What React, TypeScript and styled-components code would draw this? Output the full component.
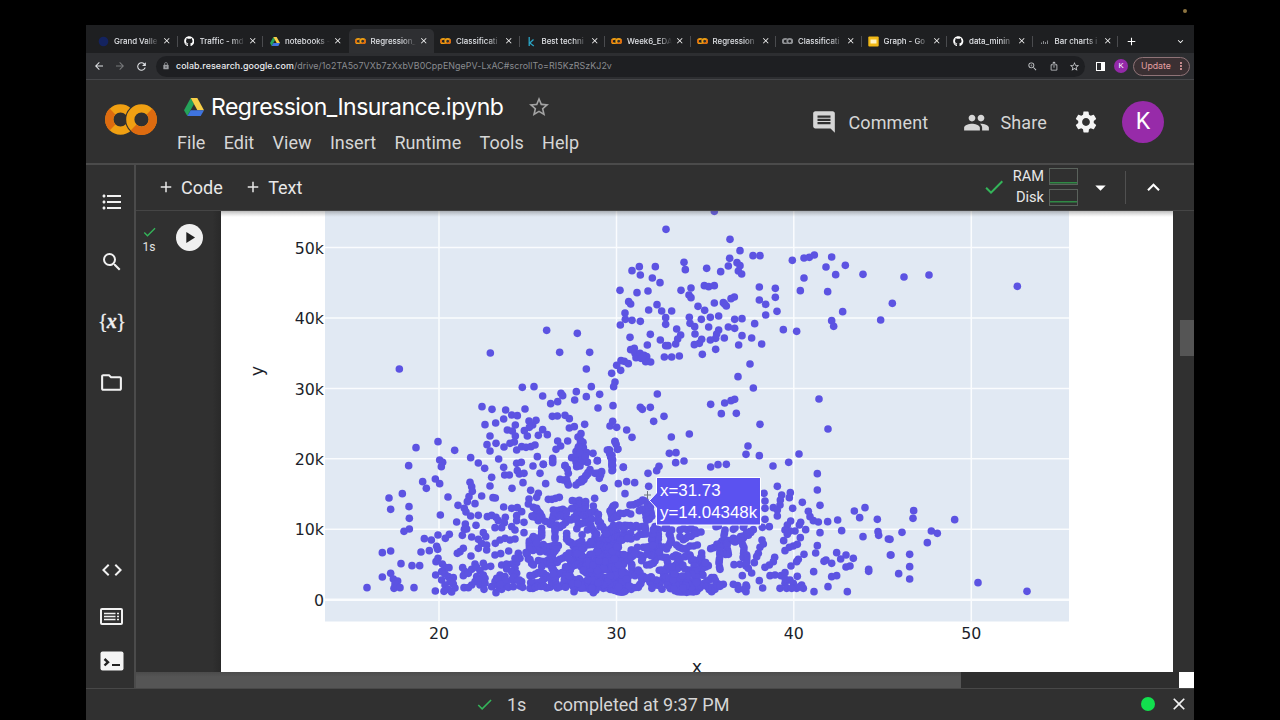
import React from "react";
import styled, { createGlobalStyle } from "styled-components";
import {
  MdInsertComment, MdPeople, MdSettings, MdSearch, MdCode, MdStarBorder, MdFormatListBulleted,
  MdOutlineFolder, MdPlayArrow, MdCheck, MdArrowDropDown, MdExpandLess, MdAdd,
  MdClose, MdArrowBack, MdArrowForward, MdRefresh, MdLock, MdZoomIn, MdIosShare, MdMoreVert,
  MdExpandMore,
} from "react-icons/md";
import { FaGithub } from "react-icons/fa";

const GlobalStyle = createGlobalStyle`
  * { box-sizing: border-box; }
  body { margin: 0; background: #000; overflow: hidden; font-family: Roboto, "Liberation Sans", sans-serif; }
`;

const Screen = styled.div`
  position: relative;
  width: 1280px;
  height: 720px;
  padding: 25px 86px 0;
  background: #000;
  overflow: hidden;
`;
const CameraDot = styled.div`
  position: absolute;
  left: 1183px;
  top: 9px;
  width: 4px;
  height: 4px;
  border-radius: 50%;
  background: #8d7440;
`;
const Browser = styled.div`
  display: flex;
  flex-direction: column;
  width: 1108px;
  height: 695px;
  background: #303030;
  > * { flex-shrink: 0; }
`;
const TabStrip = styled.div`
  display: flex;
  align-items: stretch;
  height: 28px;
  padding: 4px 0 0 6px;
  background: #1e1f21;
`;
const Tab = styled.div<{ $active?: boolean; $bare?: boolean }>`
  display: flex;
  align-items: center;
  width: 85.5px;
  padding-left: 6px;
  border-radius: 5px 5px 0 0;
  background: ${(p) => (p.$active ? "#2e2f32" : "transparent")};
  color: #dfe1e5;
  &::after {
    content: "";
    width: 1px;
    height: 11px;
    margin-left: auto;
    background: ${(p) => (p.$bare ? "transparent" : "#4a4b4e")};
  }
`;
const Favicon = styled.span`
  display: flex;
  align-items: center;
  justify-content: center;
  width: 11px;
  height: 12px;
  margin-right: 5px;
`;
const TabTitle = styled.span`
  width: 45px;
  white-space: nowrap;
  font: 500 7.9px/12px Inter, sans-serif;
  mask-image: linear-gradient(to right, #000 70%, transparent 100%);
`;
const TabClose = styled(MdClose)`
  margin-left: 3px;
  width: 9.5px;
  height: 9.5px;
  color: #fff;
`;
const StripEnd = styled.div`
  display: flex;
  flex: 1;
  align-items: center;
  justify-content: space-between;
  padding: 0 8px 0 7px;
  color: #fff;
`;
const AddressBar = styled.div`
  display: flex;
  align-items: center;
  height: 26px;
  padding: 0 4px 0 7px;
  background: #2d2e31;
  color: #dfe1e5;
`;
const NavButtons = styled.div`
  display: flex;
  gap: 9px;
  width: 63px;
`;
const Omnibox = styled.div`
  display: flex;
  align-items: center;
  width: 929px;
  height: 21px;
  padding: 0 5px 0 6px;
  border-radius: 11px;
  background: #1e1f22;
`;
const LockSlot = styled.span`
  display: flex;
  width: 8px;
`;
const Url = styled.span`
  margin-left: 6px;
  flex: 1;
  font: 400 8.9px/14px Inter, sans-serif;
  letter-spacing: 0.07px;
  color: #8a8c90;
  white-space: nowrap;
  b { font-weight: 500; color: #eceef1; }
`;
const OmniIcons = styled.div`
  display: flex;
  gap: 10.5px;
  color: #c8cacd;
`;
const SidePanelIcon = styled.span`
  width: 9px;
  height: 9px;
  margin-left: 11px;
  border: 1.3px solid #fff;
  border-right-width: 4px;
`;
const MiniAvatar = styled.span`
  width: 14px;
  height: 14px;
  margin-left: 9px;
  border-radius: 50%;
  background: #9329a8;
  color: #fff;
  font: 400 8px/14px Roboto, sans-serif;
  text-align: center;
`;
const UpdatePill = styled.span`
  display: flex;
  align-items: center;
  justify-content: space-between;
  width: 57px;
  height: 19px;
  margin-left: 5px;
  padding: 0 2px 0 7px;
  border: 1px solid #8f7377;
  border-radius: 10px;
  background: #3b3033;
  color: #e6a0a4;
  font: 400 8.7px/12px Inter, sans-serif;
`;
const Header = styled.header`
  display: flex;
  height: 86px;
  border-top: 1px solid #454649;
  border-bottom: 2px solid #4b4b4b;
  background: #303030;
  color: #d6d6d6;
`;
const LogoBox = styled.div`
  width: 91px;
  padding: 24px 0 0 19px;
`;
const TitleBlock = styled.div`
  flex: 1;
`;
const TitleRow = styled.div`
  display: flex;
  align-items: center;
  height: 30px;
  margin-top: 12px;
  padding-left: 7px;
`;
const FileName = styled.span`
  width: 316px;
  margin-left: 7px;
  font: 400 23px/30px Inter, sans-serif;
  letter-spacing: -0.52px;
  color: #fff;
  white-space: nowrap;
`;
const Menu = styled.nav`
  display: flex;
  gap: 18.3px;
  margin-top: 9px;
  font-size: 18px;
  line-height: 24px;
  letter-spacing: 0.03px;
`;
const HeaderActions = styled.div`
  display: flex;
  align-items: center;
  padding: 1px 30px 0 0;
  font-size: 18px;
  letter-spacing: 0.15px;
  svg { display: block; }
`;
const Action = styled.span<{ $gap: number; $after: number }>`
  display: flex;
  align-items: center;
  gap: ${(p) => p.$gap}px;
  margin-right: ${(p) => p.$after}px;
`;
const Avatar = styled.span`
  width: 42px;
  height: 42px;
  border-radius: 50%;
  background: #972ba9;
  color: #fff;
  font: 400 23px/42px Roboto, sans-serif;
  text-align: center;
`;
const Workspace = styled.div`
  display: flex;
  height: 523px;
`;
const SideRail = styled.aside`
  display: flex;
  flex-direction: column;
  align-items: center;
  justify-content: space-between;
  width: 50px;
  padding: 25px 0 17px;
  border-right: 2px solid #4b4b4b;
  color: #f1f1f1;
`;
const RailGroup = styled.div<{ $gap: number }>`
  display: flex;
  flex-direction: column;
  align-items: center;
  gap: ${(p) => p.$gap}px;
  padding-left: 3px;
`;
const Variables = styled.span`
  height: 24px;
  font: 20px/23px "Liberation Serif", serif;
  letter-spacing: -0.7px;
  -webkit-text-stroke: 0.3px #f1f1f1;
  i { font-weight: bold; }
`;
const Main = styled.main`
  flex: 1;
  display: flex;
  flex-direction: column;
`;
const CellToolbar = styled.div`
  display: flex;
  align-items: center;
  height: 46px;
  padding: 0 28px 1px 21px;
  border-bottom: 1px solid #454545;
  color: #e8e8e8;
  font-size: 18px;
`;
const AddButton = styled.span`
  display: flex;
  align-items: center;
  gap: 6px;
  margin-right: 21.5px;
`;
const Resources = styled.div`
  display: flex;
  align-items: center;
  margin-left: auto;
`;
const Gauges = styled.div`
  display: grid;
  grid-template-columns: 31px 29px;
  column-gap: 5px;
  row-gap: 4px;
  margin: 0 10px 0 7px;
  font-size: 14.6px;
  line-height: 17px;
  text-align: right;
  white-space: nowrap;
`;
const GaugeLabel = styled.span`
  display: flex;
  justify-content: flex-end;
`;
const Gauge = styled.span<{ $level: number }>`
  height: 17px;
  border: 1px solid #5a625c;
  background: linear-gradient(#2f8a45, #2f8a45) 0 ${(p) => p.$level}px / 100% 1.5px no-repeat;
`;
const Divider = styled.span`
  width: 1px;
  height: 33px;
  margin: 0 15px 0 12px;
  background: #505050;
`;
const CellArea = styled.div`
  display: flex;
  height: 461px;
`;
const Gutter = styled.div`
  display: flex;
  gap: 19px;
  width: 85px;
  padding: 13px 0 0 5px;
  background: linear-gradient(to right, #303030 90%, #292929);
`;
const RunState = styled.div`
  display: flex;
  flex-direction: column;
  align-items: center;
  width: 16px;
  height: 30px;
  color: #e3e3e3;
  font-size: 12px;
  line-height: 14px;
`;
const PlayButton = styled.span`
  display: flex;
  align-items: center;
  justify-content: center;
  width: 27px;
  height: 27px;
  border-radius: 50%;
  background: #f0f0f0;
  color: #222;
`;
const Output = styled.div`
  width: 952px;
  background: #fff;
  svg { display: block; }
`;
const ScrollTrack = styled.div`
  width: 21px;
  padding: 109px 0 0 7px;
  background: #303030;
`;
const ScrollThumb = styled.div`
  height: 36px;
  background: #555;
`;
const BottomScroll = styled.div`
  display: flex;
  justify-content: space-between;
  height: 16px;
  background: #2e2e2e;
`;
const BottomThumb = styled.div`
  width: 825px;
  background: linear-gradient(#4b4b4b, #555 30%);
`;
const ScrollCorner = styled.div`
  width: 15px;
  background: #fff;
`;
const StatusBar = styled.footer`
  display: flex;
  align-items: center;
  justify-content: space-between;
  height: 32px;
  padding: 0 5px 1px 389px;
  border-top: 1px solid #484848;
  background: #303030;
  color: #d6d6d6;
  font-size: 18px;
  white-space: nowrap;
`;
const StatusText = styled.div`
  display: flex;
  align-items: center;
`;
const Elapsed = styled.span`
  margin: 0 27px 0 13px;
`;
const StatusEnd = styled.div`
  display: flex;
  align-items: center;
  gap: 14px;
  color: #f1f1f1;
`;
const Online = styled.span`
  width: 14px;
  height: 14px;
  border-radius: 50%;
  background: #12e04e;
`;

const ColabMark = ({ width, dim }: { width: number; dim?: boolean }) => {
  const amber = dim ? "#8f9194" : "#f0a012";
  const deep = dim ? "#8f9194" : "#dd6b10";
  return (
    <svg width={width} viewBox="0 0 52 31" fill="none" strokeWidth="8.2">
      <circle cx="15.5" cy="15.5" r="11.2" stroke={amber} />
      <path d="M7.5 23.5A11.3 11.3 0 0 1 7.5 7.5" stroke={deep} />
      <circle cx="36.5" cy="15.5" r="16.4" fill={dim ? "#1e1f21" : "#303030"} />
      <circle cx="36.5" cy="15.5" r="11.2" stroke={amber} />
      <path d="M44.5 7.5A11.3 11.3 0 0 1 28.5 23.5" stroke={deep} />
    </svg>
  );
};

const DriveMark = ({ width }: { width: number }) => (
  <svg width={width} viewBox="0 0 20 18">
    <path d="M6.7 0L0 12.2L3.3 18L10 6Z" fill="#25a35a" />
    <path d="M6.7 0H13.3L20 12.2H13.4Z" fill="#f8cf48" />
    <path d="M3.3 18L6.7 12.2H20L16.7 18Z" fill="#3f74e0" />
  </svg>
);

type Kind = "crest" | "github" | "drive" | "colab" | "colabDim" | "kaggle" | "slides" | "bars";
const tabs: [Kind, string][] = [
  ["crest", "Grand Valle"], ["github", "Traffic - md"], ["drive", "notebooks -"],
  ["colab", "Regression_"], ["colab", "Classificati"], ["kaggle", "Best techni"],
  ["colab", "Week6_EDA"], ["colab", "Regression"], ["colabDim", "Classificati"],
  ["slides", "Graph - Go"], ["github", "data_minin"], ["bars", "Bar charts i"],
];

const TabIcon = ({ kind }: { kind: Kind }) => {
  if (kind === "github") return <FaGithub size={10.5} color="#fff" />;
  if (kind === "drive") return <DriveMark width={10} />;
  if (kind === "colab") return <ColabMark width={11} />;
  if (kind === "colabDim") return <ColabMark width={11} dim />;
  return (
    <svg width="11" height="11" viewBox="0 0 11 11">
      {kind === "crest" && <circle cx="5.5" cy="5.5" r="4.8" fill="#14235f" />}
      {kind === "kaggle" && (
        <path d="M3.2 1V10M7.5 3.5L3.8 7L7.8 10" stroke="#2aa4c4" strokeWidth="1.3" fill="none" />
      )}
      {kind === "slides" && (
        <>
          <rect x="0.3" y="0.5" width="10.4" height="10" rx="1" fill="#f1b917" />
          <rect x="2.5" y="3.5" width="6" height="4" fill="#fff3c4" />
        </>
      )}
      {kind === "bars" && <path d="M2.5 8V6.5M4.5 8V5M6.5 8V6M8.5 8V4.5" stroke="#8a8c90" />}
    </svg>
  );
};

/* Marker positions, in thirds of a pixel from the origin of each quadrant. */
const leftTop = `680,361 772,370 511,429 719,427 809,427 238,477 799,477 607,532 642,530 814,530 668,558
723,550 728,557 769,545 764,570 799,560 839,553 692,581 713,575 486,590 516,598 557,600 615,597 834,594
575,615 592,617 697,619 712,618 735,616 748,626 551,627 527,639 495,644 586,645 627,633 648,631 638,645
628,652 794,643 748,654 763,650 562,660 577,663 586,678 613,662 622,678 668,659 655,676 682,674 783,671
774,681 510,678 501,704 528,700 510,723 354,695 288,713 404,721 552,711 570,700 583,696 590,720 605,710
618,712 633,710 645,705 713,693 722,708 708,718 743,693 789,697 790,712 452,743 475,759 536,747 652,740
698,745 698,758 670,763 639,768 735,767 590,760 604,757 266,767 359,750 368,757 364,770 768,725 755,743
778,738 790,725 800,728 819,730 768,755 780,768 802,756 832,752 778,752 765,745`;
const rightTop = `343,4 198,58 390,88 420,122 459,137 480,137 389,145 411,158 420,167 385,168 415,183 425,192
362,185 320,175 252,157 256,179 166,170 118,170 96,182 121,195 157,204 180,218 60,241 111,248 144,243
243,241 273,234 267,255 273,263 313,227 326,230 343,227 403,261 393,266 343,279 370,278 379,288 374,282
478,231 526,235 526,262 478,270 497,283 497,315 531,304 86,275 92,282 75,309 76,328 96,331 121,334 61,345
146,300 171,284 185,303 215,303 197,323 197,343 294,289 314,301 268,322 270,340 284,350 285,372 304,328
331,322 356,318 404,328 426,326 464,341 326,351 385,351 404,355 356,360 350,372 347,385 331,390 373,384
426,377 455,384 485,402 416,405 347,418 307,433 230,357 242,375 233,387 227,402 204,407 197,407 181,390
151,373 142,405 90,382 305,388 298,400 283,404 193,441 215,441 238,438 92,419 103,415 105,430 108,443
120,430 123,445 132,436 140,440 137,455 152,456 128,440 50,466 63,452 73,454 85,461 62,481 35,490 45,516
41,530 172,552 39,587 121,592 127,598 151,592 192,619 161,634 80,660 96,682 38,634 30,648 50,652 45,694
54,717 28,720 32,740 38,750 38,766 268,672 214,681 208,730 228,728 227,758 252,753 70,771 332,583 374,579
393,572 404,568 364,611 409,610 450,462 414,500 460,534 480,643 444,708 438,733 478,737 332,771 354,764
379,763 597,732 566,757 519,768 657,567 684,657 550,359 590,364 577,151 612,144 628,142 643,135 695,141
678,171 736,166 707,194 789,193 612,204 601,242 683,245 728,305 695,332 701,349 842,330 877,280`;
const leftBottom = `494,115 551,112 515,142 554,135 568,135 592,122 598,132 612,130 609,158 660,130 677,161 510,168
576,175 632,181 308,155 346,147 359,161 319,175 384,201 247,191 207,204 212,238 267,230 268,265 268,297
252,304 361,255 450,157 455,170 457,184 485,198 447,200 442,215 465,221 414,226 433,235 438,246 519,203
526,204 655,190 650,202 627,207 452,258 475,256 410,276 436,282 468,286 433,298 440,297 427,316 502,260
515,256 528,262 535,272 556,262 553,278 545,293 525,293 551,231 575,235 592,233 605,245 590,257 590,272
612,277 575,290 585,300 612,308 625,222 640,232 636,258 650,240 660,250 645,255 665,262 655,272 676,274
354,315 388,313 376,325 313,326 334,330 350,349 353,358 328,362 303,366 430,355 420,365 412,370 455,321
475,328 490,308 497,320 485,340 475,355 500,345 500,360 453,378 526,340 540,330 555,325 570,330 585,327
525,375 542,371 566,363 595,370 187,368 212,363 243,401 276,407 299,407 187,441 212,430 220,447 233,453
225,462 222,475 240,473 141,473 282,473 354,385 348,395 367,402 375,412 387,413 365,425 347,435 375,432
365,450 385,440 400,443 390,455 400,462 375,465 405,474 385,478 372,484 395,486 346,483 428,413 435,425
430,437 445,430 455,418 465,402 470,412 490,400 512,409 495,410 480,422 490,435 495,445 470,440 465,455
478,450 455,465 432,473 445,473 480,465 495,460 492,478 515,470 545,405 560,402 575,402 590,398 600,385
585,385 560,417 585,415 575,425 590,430 540,435 555,440 530,445 525,455 560,455 545,455 575,450 590,450
605,455 535,468 550,470 565,472 580,470 600,468 528,488 545,478 608,472 852,175 824,205 820,228 735,107
802,97 832,92 698,92 670,103`;
const rightBottom = `55,161 80,155 104,158 75,191 144,130 170,122 177,109 146,169 303,306 302,265 12,174 70,112
652,131 652,180 660,226 532,169 571,188 568,203 545,195 541,210 540,225 520,233 532,240 532,258 607,217
578,235 625,244 630,260 640,272 655,276 683,275 713,270 660,308 725,302 617,299 572,273 562,285 585,303
602,277 598,285 570,303 555,300 562,313 551,332 601,323 592,343 580,348 568,352 555,362 652,347 647,369
612,373 595,388 590,395 573,408 641,425 710,368 738,375 722,387 760,385 678,390 672,394 695,400 750,408
738,411 806,418 806,424 710,437 695,440 684,470 642,485 742,485 763,243 795,233 779,263 832,268 789,320
834,305 836,316 865,327 871,375 495,213 495,235 492,190 495,268 487,292 508,290 486,330 490,342 480,352
475,370 470,380 463,398 524,382 520,395 508,405 495,412 478,452 488,474 455,429 427,437 402,404 420,403
438,408 445,415 440,380 430,380 400,463 413,467 415,478 438,465 432,478 438,485 440,470 510,437 525,435
543,437 555,428 592,439 570,450 555,460 540,475 560,475 580,460 590,475 605,465 610,475 600,470 575,475
556,448`;
const farRight = `42,201 117,195 382,229 71,902 69,925 36,967 124,963 142,970 112,998 194,929 59,1033 59,1070
59,1107 26,1091 3,1035 0,988 264,1118 411,1144`;

/* Runs of overlapping markers, each walked from point to point. */
const leftRuns = [
  "685,208 718,205", "720,148 740,150 745,167", "742,117 745,128", "768,165 785,150 810,122 798,140 785,155",
  "770,80 770,112 785,95 790,60", "838,145 845,127 825,132", "757,212 778,210 775,228 755,238",
  "797,215 795,240 770,250 800,260 815,245 835,250 835,275 848,288", "700,240 738,240 740,262 700,256 690,285 720,290 762,262",
  "765,262 775,282 792,280 815,268", "705,290 705,325", "665,295 665,320 628,330 628,350 660,345 690,350 715,345 700,370 660,362 628,358",
  "740,310 740,330 760,345 785,340 785,330", "812,285 825,310 825,340 800,348 770,360", "618,368 625,385 640,405",
  "655,392 680,400 712,398 692,382 665,408", "720,388 765,362 765,400 745,385", "780,352 780,400 800,382 830,365 860,355 895,350",
  "880,228 870,245 893,260", "855,300 888,292 893,340 852,322 870,350", "630,437 655,430 680,435 665,455 632,460",
  "630,475 655,470 680,472 700,465 690,445 712,432 700,420 712,475", "650,235 665,262 638,262", "868,60 875,90 878,122",
  "800,400 830,390 860,380 890,370", "735,465 760,450 790,455 820,445", "762,485 765,470 800,475 820,486 835,470", "870,410 880,380",
  "722,430 748,410 775,405 800,420", "840,330 830,370", "742,455 720,472", "690,400 700,430", "640,320 650,335",
  "800,430 830,415 860,400 890,400", "810,460 840,450 870,440 895,430", "850,475 890,475",
];
const rightRuns = [
  "45,225 32,240 35,265 60,252 92,250", "90,225 110,222 128,212 150,225 155,260 140,270 135,240 118,240", "20,310 40,290 75,285 100,290 135,290 138,310 110,318",
  "20,330 45,320 70,325 72,300", "165,290 175,300 175,340 155,330 160,300", "130,352 160,352 200,355 215,335 208,310 215,300",
  "195,295 200,292", "240,300 262,297 285,297 290,312 265,318 250,330 240,320", "230,345 250,360 270,350 292,348",
  "375,300 372,320 360,340 332,355", "362,350 380,340 400,325 430,325 460,300 430,315 405,335", "425,335 432,355 430,380",
  "380,340 385,375 360,365 357,400 360,418", "400,298 405,290", "348,290 355,288", "430,292 432,288", "0,345 20,350 40,345 55,370 80,380 110,370 130,380 125,395",
  "0,380 25,370 30,400 0,400", "75,385 95,400 95,425 105,440", "140,405 160,400 175,375 200,385 205,410 195,425", "160,370 165,350",
  "220,380 235,375 240,395 225,405", "255,380 270,372 275,395 300,390 305,370 305,420 285,430", "300,415 325,410", "245,410 265,420 290,420",
  "90,470 115,475 130,440 150,455 175,465 190,445 215,450 230,440", "210,420 225,435 225,480 250,487 270,487 290,487 300,470",
  "245,440 260,455 250,470 240,450", "290,430 295,470 320,455 342,440 350,460 370,463", "335,485 320,470 345,475 360,467",
  "185,420 195,440", "270,455 275,475", "0,420 20,415 40,420 65,425 85,440 80,460 60,470 35,450 10,445 25,465 5,470 35,475 62,488 85,478", "50,430 40,460 70,450",
  "55,485 75,485", "115,420 125,440", "440,375 440,400", "0,290 8,290", "22,60 36,75 36,120", "45,35 52,55",
];
const bands: [number, number, number, number, number][] = [
  [585, 560, 626, 590, 75], [562, 562, 584, 588, 18], [576, 526, 600, 556, 14],
  [604, 530, 632, 560, 22], [626, 562, 706, 590, 30], [668, 572, 700, 591, 18], [576, 438, 586, 462, 7],
  [634, 534, 663, 556, 8], [498, 577, 520, 589, 6],
];

type Point = [number, number];
const parse = (text: string): Point[] => text.trim().split(/\s+/).map((p) => p.split(",").map(Number) as Point);
const place = (pts: Point[], x: number, y: number): Point[] => pts.map(([a, b]) => [x + a / 3, y + b / 3]);
const walk = (run: string): Point[] => {
  const pts = parse(run);
  const out: Point[] = [pts[0]];
  for (let i = 1; i < pts.length; i++) {
    const [ax, ay] = pts[i - 1];
    const [bx, by] = pts[i];
    const n = Math.max(1, Math.round(Math.hypot(bx - ax, by - ay) / 10));
    for (let k = 1; k <= n; k++) {
      const wobble = ((i * 7 + k * 5 + ax) % 7) - 3;
      out.push([ax + ((bx - ax) * k) / n, ay + ((by - ay) * k) / n + wobble]);
    }
  }
  return out;
};
let seed = 41;
const random = () => {
  seed = (seed * 16807) % 2147483647;
  return seed / 2147483647;
};
const markers: Point[] = [
  ...place(parse(leftTop), 320, 210),
  ...place(parse(rightTop), 600, 210),
  ...place(parse(leftBottom), 320, 430),
  ...place(parse(rightBottom), 600, 430),
  ...place(parse(farRight), 890, 210),
  ...leftRuns.flatMap((r) => place(walk(r), 320, 430)),
  ...rightRuns.flatMap((r) => place(walk(r), 600, 430)),
  ...bands.flatMap(([x0, y0, x1, y1, n]) =>
    Array.from({ length: n }, (): Point => [x0 + random() * (x1 - x0), y0 + random() * (y1 - y0)])),
];

const yTicks: [number, string][] = [
  [247.5, "50k"], [318, "40k"], [388.5, "30k"], [458.8, "20k"], [529.3, "10k"], [599.8, "0"],
];
const xTicks: [number, string][] = [[439, "20"], [616.5, "30"], [793.8, "40"], [971.3, "50"]];

const ScatterChart = () => (
  <svg width="952" height="461" viewBox="221 211 952 461" fontFamily="DejaVu Sans, sans-serif" fontSize="15.8" fill="#1c1f2b">
    <defs>
      <linearGradient id="edge" x2="0" y2="1">
        <stop offset="0" stopColor="#555" stopOpacity="0.4" />
        <stop offset="1" stopColor="#888" stopOpacity="0" />
      </linearGradient>
    </defs>
    <rect x="325" y="211" width="744" height="410.5" fill="#e1e9f3" />
    <g stroke="#fafcfe" strokeWidth="1.5">
      {yTicks.map(([y, t]) => (
        <line key={t} x1="325" x2="1069" y1={y} y2={y} strokeWidth={t === "0" ? 2.6 : 1.5} />
      ))}
      {xTicks.map(([x, t]) => <line key={t} x1={x} x2={x} y1="211" y2="621.5" />)}
    </g>
    <g fill="#5c53e2">
      {markers.map(([x, y], i) => <circle key={i} cx={x} cy={y} r="3.8" />)}
    </g>
    {yTicks.map(([y, t]) => <text key={t} x="324" y={y + 6} textAnchor="end">{t}</text>)}
    {xTicks.map(([x, t]) => <text key={t} x={x} y="639" textAnchor="middle">{t}</text>)}
    <text transform="translate(263 371) rotate(-90)" textAnchor="middle" fontSize="17.5">y</text>
    <text x="697" y="673" textAnchor="middle" fontSize="17.5">x</text>
    <path d="M644 495H651M647.5 491V499" stroke="#6d7480" />
    <path d="M649.5 500.5L656.5 493V477.5H760.5V525H656.5V508Z" fill="#5b52f0" stroke="#fff" />
    <g fill="#fff" fontFamily="Liberation Sans, sans-serif" fontSize="16.9">
      <text x="660" y="496">x=31.73</text>
      <text x="660" y="517.8">y=14.04348k</text>
    </g>
    <rect x="221" y="211" width="952" height="6" fill="url(#edge)" />
  </svg>
);

const SnippetIcon = () => (
  <svg width="23" height="17" viewBox="0 0 23 17" fill="none" stroke="#f1f1f1">
    <rect x="1" y="1" width="21" height="15" rx="1" strokeWidth="2" />
    <path d="M4 5.5H15.5M4 8.5H15.5M4 11.5H15.5M17 5.5H19M17 8.5H19M17 11.5H19" strokeWidth="1.5" />
  </svg>
);

const TerminalIcon = () => (
  <svg width="24" height="20" viewBox="0 0 24 20">
    <rect x="0.5" y="0.5" width="23" height="19" rx="2" fill="#f4f4f4" />
    <path d="M4.5 8L8 11.2L4.5 14.5" fill="none" stroke="#222" strokeWidth="2.4" />
    <path d="M12 14H20" stroke="#222" strokeWidth="2" />
  </svg>
);

export default function App() {
  return (
    <Screen>
      <GlobalStyle />
      <CameraDot />
      <Browser>
        <TabStrip>
          {tabs.map(([kind, title], i) => (
            <Tab key={i} $active={i === 3} $bare={i === 2 || i === 3}>
              <Favicon><TabIcon kind={kind} /></Favicon>
              <TabTitle>{title}</TabTitle>
              <TabClose />
            </Tab>
          ))}
          <StripEnd><MdAdd size={13} /><MdExpandMore size={11} /></StripEnd>
        </TabStrip>
        <AddressBar>
          <NavButtons>
            <MdArrowBack size={12} /><MdArrowForward size={12} color="#77787b" /><MdRefresh size={13} />
          </NavButtons>
          <Omnibox>
            <LockSlot><MdLock size={8} color="#9b9da1" /></LockSlot>
            <Url><b>colab.research.google.com</b>/drive/1o2TA5o7VXb7zXxbVB0CppENgePV-LxAC#scrollTo=RI5KzRSzKJ2v</Url>
            <OmniIcons><MdZoomIn size={11} /><MdIosShare size={10} /><MdStarBorder size={11} /></OmniIcons>
          </Omnibox>
          <SidePanelIcon />
          <MiniAvatar>K</MiniAvatar>
          <UpdatePill>Update<MdMoreVert size={12} /></UpdatePill>
        </AddressBar>
        <Header>
          <LogoBox><ColabMark width={52} /></LogoBox>
          <TitleBlock>
            <TitleRow>
              <DriveMark width={20} />
              <FileName>Regression_Insurance.ipynb</FileName>
              <MdStarBorder size={24} color="#a3a3a3" />
            </TitleRow>
            <Menu>
              {["File", "Edit", "View", "Insert", "Runtime", "Tools", "Help"].map((m) => <span key={m}>{m}</span>)}
            </Menu>
          </TitleBlock>
          <HeaderActions>
            <Action $gap={11} $after={35}><MdInsertComment size={26} />Comment</Action>
            <Action $gap={10} $after={26}><MdPeople size={27} />Share</Action>
            <Action $gap={0} $after={23}><MdSettings size={26} color="#f4f4f4" /></Action>
            <Avatar>K</Avatar>
          </HeaderActions>
        </Header>
        <Workspace>
          <SideRail>
            <RailGroup $gap={36}>
              <MdFormatListBulleted size={24} />
              <MdSearch size={24} />
              <Variables>{"{"}<i>x</i>{"}"}</Variables>
              <MdOutlineFolder size={25} />
            </RailGroup>
            <RailGroup $gap={26}>
              <MdCode size={24} />
              <SnippetIcon />
              <TerminalIcon />
            </RailGroup>
          </SideRail>
          <Main>
            <CellToolbar>
              <AddButton><MdAdd size={18} />Code</AddButton>
              <AddButton><MdAdd size={18} />Text</AddButton>
              <Resources>
                <MdCheck size={24} color="#34b55a" />
                <Gauges>
                  <GaugeLabel>RAM</GaugeLabel><Gauge $level={13} />
                  <GaugeLabel>Disk</GaugeLabel><Gauge $level={11} />
                </Gauges>
                <MdArrowDropDown size={25} color="#fff" />
                <Divider />
                <MdExpandLess size={25} color="#fff" />
              </Resources>
            </CellToolbar>
            <CellArea>
              <Gutter>
                <RunState><MdCheck size={17} color="#34b55a" />1s</RunState>
                <PlayButton><MdPlayArrow size={19} /></PlayButton>
              </Gutter>
              <Output><ScatterChart /></Output>
              <ScrollTrack><ScrollThumb /></ScrollTrack>
            </CellArea>
            <BottomScroll><BottomThumb /><ScrollCorner /></BottomScroll>
          </Main>
        </Workspace>
        <StatusBar>
          <StatusText>
            <MdCheck size={19} color="#34b55a" />
            <Elapsed>1s</Elapsed>
            <span>completed at 9:37 PM</span>
          </StatusText>
          <StatusEnd><Online /><MdClose size={20} /></StatusEnd>
        </StatusBar>
      </Browser>
    </Screen>
  );
}
